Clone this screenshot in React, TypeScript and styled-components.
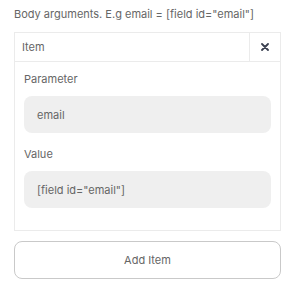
import React from 'react';
import styled, { createGlobalStyle } from 'styled-components';

const GlobalStyle = createGlobalStyle`
  body {
    margin: 0;
    background: #ffffff;
    font-family: Inter, "Liberation Sans", sans-serif;
  }
`;

const Page = styled.div`
  padding: 7px 16px 0 14px;
`;

const Hint = styled.div`
  font-size: 11px;
  line-height: 14px;
  color: #666666;
  margin-bottom: 11px;
`;

const Card = styled.div`
  border: 1px solid #ebebeb;
  background: #fff;
`;

const CardHeader = styled.div`
  display: flex;
  height: 28px;
  border-bottom: 1px solid #ebebeb;
`;

const CardTitle = styled.div`
  flex: 1;
  display: flex;
  align-items: center;
  padding-left: 7px;
  font-size: 11px;
  color: #666666;
`;

const CloseCell = styled.button`
  width: 31px;
  border: none;
  border-left: 1px solid #ebebeb;
  background: transparent;
  display: flex;
  align-items: center;
  justify-content: center;
  padding: 0;
  cursor: pointer;
`;

const CardBody = styled.div`
  padding: 10px 9px 22px 9px;
  display: flex;
  flex-direction: column;
`;

const Label = styled.div`
  font-size: 11px;
  line-height: 14px;
  color: #666666;
  margin-bottom: 10px;
  margin-top: ${(p: { $first?: boolean }) => (p.$first ? '0' : '14px')};
`;

const Field = styled.div`
  height: 37px;
  border-radius: 8px;
  background: #efefef;
  display: flex;
  align-items: center;
  padding-left: 13px;
  font-size: 11px;
  color: #666666;
`;

const AddButton = styled.button`
  margin-top: 10px;
  width: 100%;
  height: 38px;
  border: 1px solid #c9c9c9;
  border-radius: 8px;
  background: #fff;
  font-family: Inter, "Liberation Sans", sans-serif;
  font-size: 11px;
  color: #666666;
  cursor: pointer;
`;

export default function App() {
  return (
    <>
      <GlobalStyle />
      <Page>
        <Hint>Body arguments. E.g email = [field id="email"]</Hint>
        <Card>
          <CardHeader>
            <CardTitle>Item</CardTitle>
            <CloseCell>
              <svg width="8" height="8" viewBox="0 0 8 8">
                <path d="M1 1 L7 7 M7 1 L1 7" stroke="#3a4050" strokeWidth="1.8" strokeLinecap="round" />
              </svg>
            </CloseCell>
          </CardHeader>
          <CardBody>
            <Label $first>Parameter</Label>
            <Field>email</Field>
            <Label>Value</Label>
            <Field>[field id="email"]</Field>
          </CardBody>
        </Card>
        <AddButton>Add Item</AddButton>
      </Page>
    </>
  );
}
